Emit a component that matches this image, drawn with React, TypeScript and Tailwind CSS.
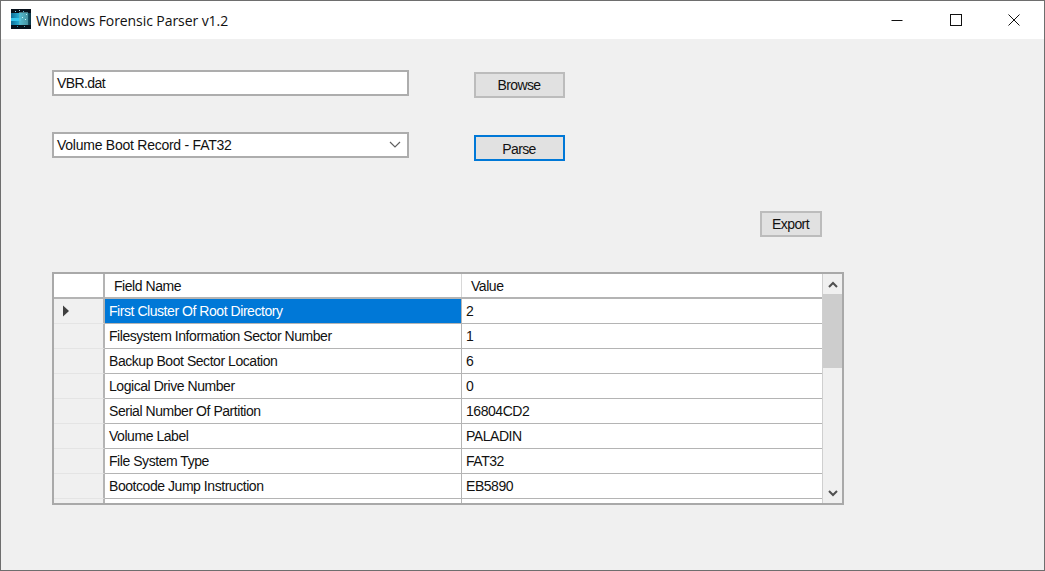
const rows = [
  ["First Cluster Of Root Directory", "2"],
  ["Filesystem Information Sector Number", "1"],
  ["Backup Boot Sector Location", "6"],
  ["Logical Drive Number", "0"],
  ["Serial Number Of Partition", "16804CD2"],
  ["Volume Label", "PALADIN"],
  ["File System Type", "FAT32"],
  ["Bootcode Jump Instruction", "EB5890"],
  ["", ""],
];

const AppIcon = () => (
  <svg width="20" height="20" viewBox="0 0 20 20" className="shrink-0 self-start mt-[8px]">
    <defs>
      <linearGradient id="glow" x1="0" y1="0" x2="1" y2="0">
        <stop offset="0" stopColor="#0d6d96" />
        <stop offset="0.45" stopColor="#2bb5dc" />
        <stop offset="1" stopColor="#0a3342" />
      </linearGradient>
    </defs>
    <rect width="20" height="20" fill="#07111c" />
    <rect x="0" y="4" width="20" height="12" fill="url(#glow)" />
    <rect x="0" y="9" width="10" height="3" fill="#35c8f0" />
    <rect x="8" y="3" width="9" height="13" fill="#6cbcc4" opacity="0.6" />
    <rect x="4" y="2" width="1" height="1" fill="#7fd8f0" />
    <rect x="8" y="1" width="1" height="1" fill="#9fe6f5" />
    <rect x="12" y="2" width="1" height="1" fill="#5fb4c8" />
    <rect x="15" y="5" width="1" height="1" fill="#b4eef5" />
    <rect x="11" y="8" width="1" height="1" fill="#c8f4f5" />
    <rect x="14" y="10" width="1" height="1" fill="#c8f4f5" />
    <rect x="6" y="17" width="1" height="1" fill="#2d92b4" />
    <rect x="13" y="17" width="1" height="1" fill="#4f9fae" />
  </svg>
);

const Button = ({ label, className }: { label: string; className: string }) => (
  <button className={`flex items-center justify-center bg-[#e1e1e1] text-[14px] leading-none text-[#111] tracking-[-0.6px] pr-[1px] ${className}`}>
    {label}
  </button>
);

export default function App() {
  return (
    <div className="w-[1045px] h-[571px] flex flex-col overflow-hidden border border-[#6e6e6e] bg-[#f0f0f0] font-['Liberation_Sans',sans-serif] text-[14px] text-[#111] tracking-[-0.45px]">
      <div className="h-[38px] shrink-0 bg-white flex items-center pl-[10px] pr-[1px]">
        <AppIcon />
        <span className="ml-[5px] font-['Open_Sans',sans-serif] text-[14px] tracking-[-0.07px]">Windows Forensic Parser v1.2</span>
        <div className="ml-auto flex items-center">
          <div className="w-[58px] flex justify-center">
            <svg width="12" height="12" viewBox="0 0 12 12"><path d="M0.5 6.5h11" stroke="#111" /></svg>
          </div>
          <div className="w-[59px] flex justify-center">
            <svg width="12" height="12" viewBox="0 0 12 12"><rect x="0.5" y="0.5" width="11" height="11" fill="none" stroke="#111" /></svg>
          </div>
          <div className="w-[58px] flex justify-center">
            <svg width="12" height="12" viewBox="0 0 12 12"><path d="M0.5 0.5l11 11M11.5 0.5l-11 11" stroke="#111" /></svg>
          </div>
        </div>
      </div>

      <div className="flex-1 flex flex-col pl-[51px] pt-[31px]">
        <div className="flex items-start">
          <div className="w-[357px] h-[26px] bg-white border-2 border-[#adadad] flex items-center pl-[3px] tracking-[-0.6px]">VBR.dat</div>
          <Button label="Browse" className="ml-[65px] mt-[2px] w-[91px] h-[26px] border-2 border-[#bcbcbc]" />
        </div>

        <div className="flex items-start mt-[34px]">
          <div className="w-[357px] h-[26px] bg-white border-2 border-[#adadad] flex items-center justify-between pl-[3px] pr-[6px] tracking-[-0.25px]">
            <span>Volume Boot Record - FAT32</span>
            <svg width="12" height="8" viewBox="0 0 12 8"><path d="M1 1l5 5 5-5" fill="none" stroke="#606060" strokeWidth="1.2" /></svg>
          </div>
          <Button label="Parse" className="ml-[65px] mt-[3px] w-[91px] h-[26px] pt-[1px] border-2 border-[#0078d7]" />
        </div>

        <Button label="Export" className="ml-[708px] mt-[50px] w-[62px] h-[26px] border-2 border-[#bcbcbc]" />

        <div className="mt-[35px] w-[792px] h-[233px] flex border-2 border-[#a9a9a9] bg-[#f0f0f0]">
          <div className="flex-1 overflow-hidden">
            <div className="flex h-[25px] bg-white border-b-2 border-[#b4b4b4]">
              <div className="w-[51px] shrink-0 border-r-2 border-[#b4b4b4]" />
              <div className="w-[357px] shrink-0 border-r border-[#d8d8d8] pl-[9px] pt-[1px] flex items-center">Field Name</div>
              <div className="flex-1 pl-[9px] pt-[1px] flex items-center">Value</div>
            </div>
            {rows.map(([name, value], i) => (
              <div key={i} className="flex h-[25px]">
                <div className="w-[51px] shrink-0 bg-[#f0f0f0] border-r-2 border-[#b4b4b4] border-b border-b-[#e4e4e4] flex items-center pl-[8px]">
                  {i === 0 && (
                    <svg width="8" height="12" viewBox="0 0 8 12"><path d="M1 0.5l6 5.5-6 5.5z" fill="#404040" /></svg>
                  )}
                </div>
                <div className={`w-[357px] shrink-0 border-r border-b border-[#b4b4b4] pl-[4px] flex items-center ${i === 0 ? "bg-[#0078d7] text-white" : "bg-white"}`}>
                  {name}
                </div>
                <div className="flex-1 bg-white border-b border-[#b4b4b4] pl-[4px] flex items-center">{value}</div>
              </div>
            ))}
          </div>
          <div className="w-[20px] shrink-0 flex flex-col items-center bg-[#f0f0f0] border-l border-[#cfcfcf]">
            <div className="h-[20px] flex items-center justify-center">
              <svg width="10" height="7" viewBox="0 0 10 7"><path d="M1 6l4-4 4 4" fill="none" stroke="#505050" strokeWidth="2" /></svg>
            </div>
            <div className="w-full h-[74px] bg-[#cdcdcd]" />
            <div className="mt-auto h-[20px] flex items-center justify-center">
              <svg width="10" height="7" viewBox="0 0 10 7"><path d="M1 1l4 4 4-4" fill="none" stroke="#505050" strokeWidth="2" /></svg>
            </div>
          </div>
        </div>
      </div>
    </div>
  );
}
